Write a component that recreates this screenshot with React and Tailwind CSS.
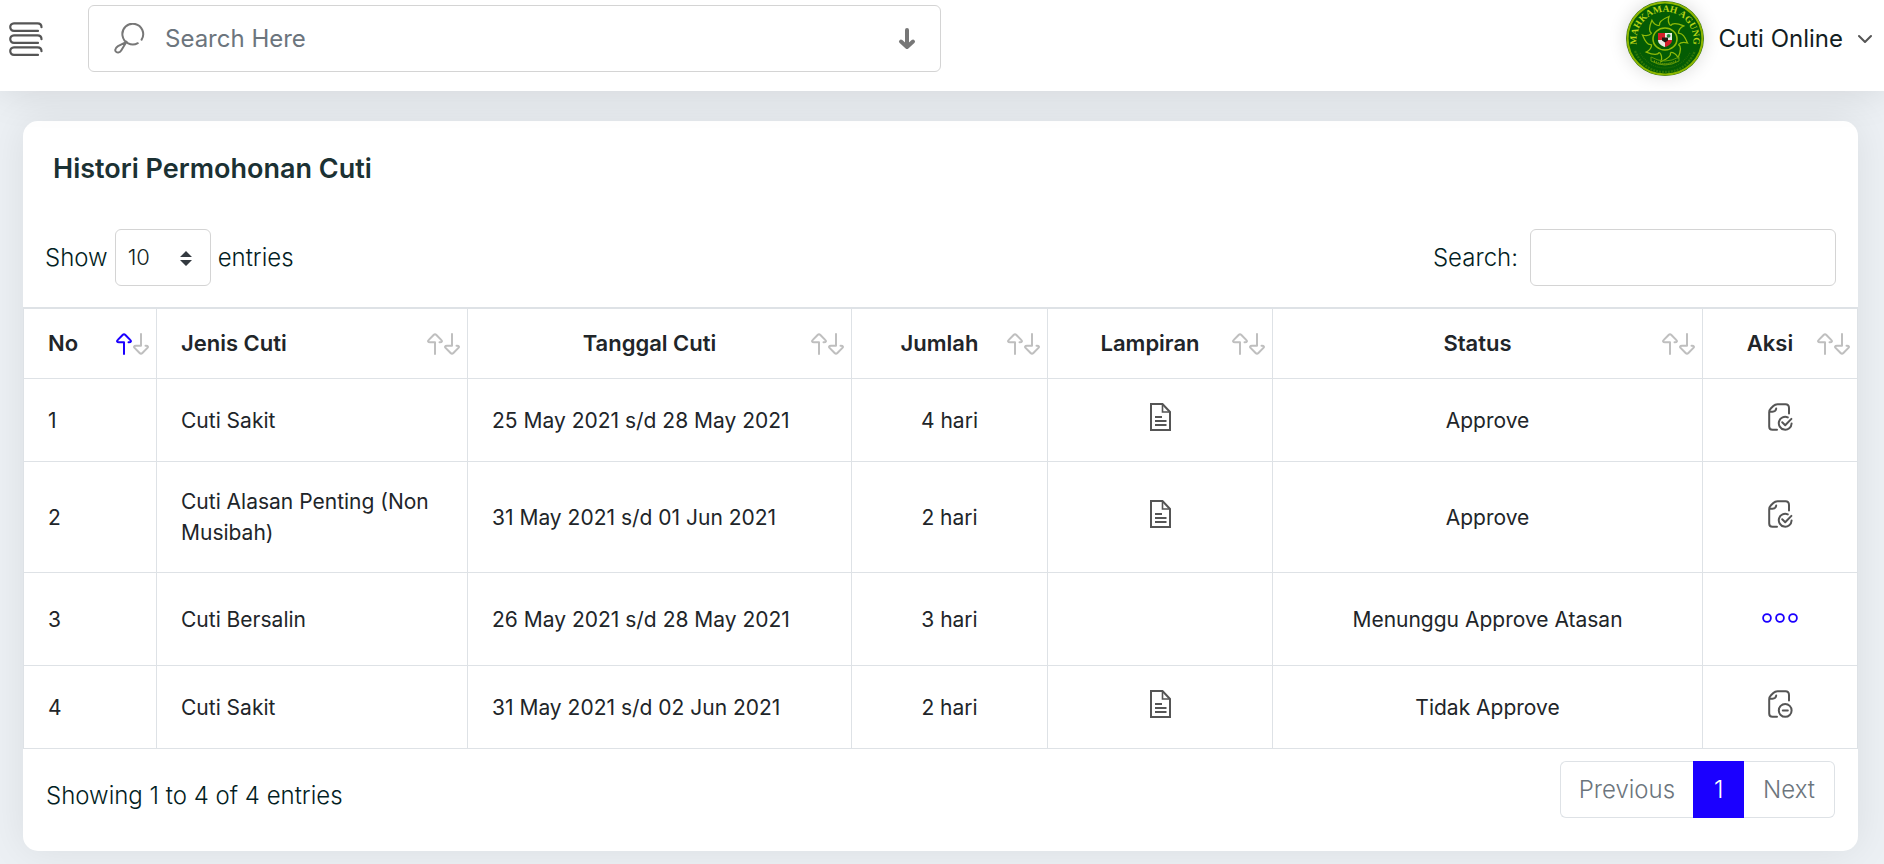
import { useState } from 'react';
import clsx from 'clsx';

const columns = [
  { key: 'no', label: 'No', width: 'w-[133px]', center: false },
  { key: 'jenis', label: 'Jenis Cuti', width: 'w-[311px]', center: false },
  { key: 'tanggal', label: 'Tanggal Cuti', width: 'w-[384px]', center: true },
  { key: 'jumlah', label: 'Jumlah', width: 'w-[196px]', center: true },
  { key: 'lampiran', label: 'Lampiran', width: 'w-[225px]', center: true },
  { key: 'status', label: 'Status', width: 'w-[430px]', center: true },
  { key: 'aksi', label: 'Aksi', width: 'w-[155px]', center: true },
];

const rows = [
  { no: 1, jenis: 'Cuti Sakit', tanggal: '25 May 2021 s/d 28 May 2021', jumlah: '4 hari', lampiran: true, status: 'Approve', aksi: 'check' },
  { no: 2, jenis: 'Cuti Alasan Penting (Non Musibah)', tanggal: '31 May 2021 s/d 01 Jun 2021', jumlah: '2 hari', lampiran: true, status: 'Approve', aksi: 'check' },
  { no: 3, jenis: 'Cuti Bersalin', tanggal: '26 May 2021 s/d 28 May 2021', jumlah: '3 hari', lampiran: false, status: 'Menunggu Approve Atasan', aksi: 'more' },
  { no: 4, jenis: 'Cuti Sakit', tanggal: '31 May 2021 s/d 02 Jun 2021', jumlah: '2 hari', lampiran: true, status: 'Tidak Approve', aksi: 'minus' },
];

const stroke = {
  fill: 'none',
  stroke: 'currentColor',
  strokeLinecap: 'round',
  strokeLinejoin: 'round',
};

function MenuIcon() {
  return (
    <svg width="34" height="34" viewBox="0 0 34 34" strokeWidth="2.2" {...stroke}>
      {[0, 12, 24].map((y) => (
        <path key={y} transform={`translate(0 ${y})`} d="M32.5 5.2C32.5 2.8 31 1.3 28.5 1.3H5C0 1.3 0 8.9 5 8.9H29" />
      ))}
    </svg>
  );
}

function SearchIcon() {
  return (
    <svg width="31" height="31" viewBox="0 0 31 31" strokeWidth="2" {...stroke}>
      <path d="M27.6 16.6A10.4 10.4 0 1 0 23.8 20.2" />
      <path d="M12.5 18.8L4 23.2C1.6 24.8.7 26.5 1.6 28.2C2.8 30.1 5.6 30 7.2 27.4L12.5 18.8" />
    </svg>
  );
}

function SortArrow({ active, down }) {
  return (
    <svg
      width="16"
      height="22"
      viewBox="0 0 16 22"
      strokeWidth="2"
      className={active ? 'text-[#1b00ff]' : 'text-[#bfbfbf]'}
      {...stroke}
    >
      <path
        transform={down ? 'matrix(1 0 0 -1 0 22)' : undefined}
        d="M8 21V9.3H3C1 9.3.5 8 1.8 6.9L6.6 2C7.6 1 8.4 1 9.4 2L14.2 6.9C15.5 8 15 9.3 13 9.3H12.5"
      />
    </svg>
  );
}

function FileIcon() {
  return (
    <svg width="21" height="28" viewBox="0 0 21 28" fill="none" stroke="currentColor" strokeWidth="2">
      <path d="M1 1H12.5L20 9V27H1Z" />
      <path d="M12.5 1V9H20" strokeWidth="1.6" />
      <path d="M5 14H12M5 18H16.5M5 22H16.5" />
    </svg>
  );
}

function FileStatusIcon({ type }) {
  return (
    <svg width="25" height="28" viewBox="0 0 25 28" strokeWidth="2" {...stroke}>
      <path d="M21 10.5V5C21 2.5 19.8 1.2 17.5 1.2H9.5C7.5 1.2 6.5 1.8 5.3 3L3 5.3C1.6 6.7 1.2 7.6 1.2 9.3V23.5C1.2 25.8 2.3 26.8 4.5 26.8H9" />
      <path d="M2 8.7H4.5C6.8 8.7 8 7.7 8.2 5.5" />
      {type === 'check' ? (
        <>
          <path d="M19.8 14.4A6.4 6.4 0 1 0 23.6 20.5" />
          <path d="M14.2 19.3L17.2 22.2L23.4 15.9" />
        </>
      ) : (
        <>
          <circle cx="17.2" cy="20.4" r="6.4" />
          <path d="M14.8 20.4H19.8" />
        </>
      )}
    </svg>
  );
}

function MoreIcon() {
  return (
    <svg width="36" height="10" viewBox="0 0 36 10" fill="none" stroke="currentColor" strokeWidth="1.8">
      <circle cx="5" cy="5" r="3.9" />
      <circle cx="18" cy="5" r="3.9" />
      <circle cx="31" cy="5" r="3.9" />
    </svg>
  );
}

function Emblem() {
  return (
    <svg width="78" height="75" viewBox="0 0 78 75" preserveAspectRatio="none">
      <defs>
        <path id="emblem-arc" d="M13.2 51A28.4 28.4 0 1 1 64.8 51" />
      </defs>
      <ellipse cx="39" cy="37.5" rx="39" ry="37.5" fill="#2f6b1c" />
      <ellipse cx="39" cy="37.5" rx="37.4" ry="36" fill="#045c04" stroke="#8db600" strokeWidth="2" />
      <text fill="#b9d416" fontFamily="'Liberation Serif', serif" fontWeight="bold" fontSize="9.5">
        <textPath href="#emblem-arc" startOffset="50%" textAnchor="middle">
          MAHKAMAH AGUNG
        </textPath>
      </text>
      <g fill="none" stroke="#8fbb08" strokeWidth="1.3">
        {[0, 45, 90, 135, 180, 225, 270, 315].map((angle) => (
          <path
            key={angle}
            transform={`translate(39 38) rotate(${angle})`}
            d="M-5.5 -13.5C-6.5 -17 -3.5 -19.5 4 -22.5C2.6 -18.5 3 -16 5.6 -13.4"
          />
        ))}
        <ellipse cx="39" cy="38" rx="12" ry="11" strokeWidth="1.6" />
      </g>
      {/* perisai */}
      <path d="M32 32H39V39H32Z" fill="#d3202a" />
      <path d="M39 32H46V39H39Z" fill="#e9ece4" />
      <path d="M32 39H39V46C34.5 44.5 32 42 32 39Z" fill="#e9ece4" />
      <path d="M46 39H39V46C43.5 44.5 46 42 46 39Z" fill="#d3202a" />
      <circle cx="42.6" cy="34.8" r="1.9" fill="#1d8a3a" />
      <path d="M36 36.5H42V39.5L39 41.5L36 39.5Z" fill="#1f1a10" />
      <g fill="none" stroke="#5f9a08">
        <path d="M25 56Q39 64 53 56V60Q39 68 25 60Z" strokeWidth="1" />
        <path d="M28 60Q39 65.5 50 60" stroke="#86a80a" strokeWidth="1.4" strokeDasharray="1 1" />
        <path d="M9 50C17 68 29 71 39 71S61 68 69 50" stroke="#2b7406" strokeWidth="2.4" strokeDasharray="2 1" />
        <path d="M14 52C21 63 30 67 39 67S57 63 64 52" stroke="#236b06" strokeWidth="1.4" strokeDasharray="1 1" />
      </g>
    </svg>
  );
}

function Header() {
  return (
    <header className="relative z-10 flex h-[91px] items-center bg-white pb-[14px] pl-[9px] pr-3 shadow-[0_0_42px_rgba(0,0,0,0.12)]">
      <button type="button" aria-label="Menu" className="shrink-0 text-[#555]">
        <MenuIcon />
      </button>
      <form
        className="ml-[45px] flex h-[67px] w-[853px] items-center rounded-md border border-[#d4d4d4] pl-[25px] pr-6 text-[#777]"
        onSubmit={(e) => e.preventDefault()}
      >
        <SearchIcon />
        <input
          type="text"
          aria-label="Search Here"
          placeholder="Search Here"
          className="ml-5 min-w-0 flex-1 bg-transparent text-2xl text-[#131e22] outline-none placeholder:text-[#6c757d]"
        />
        <button type="button" aria-label="Filter" className="text-[#777]">
          <svg width="18" height="22" viewBox="0 0 18 22" strokeWidth="4" {...stroke}>
            <path d="M9 2V18M3 13.5L9 19L15 13.5" />
          </svg>
        </button>
      </form>
      <button type="button" className="ml-auto flex items-center text-2xl text-[#131e22]">
        <span className="rounded-full shadow-[0_0_18px_rgba(0,0,0,0.15)]">
          <Emblem />
        </span>
        <span className="ml-[15px]">Cuti Online</span>
        <svg width="14" height="10" viewBox="0 0 14 10" strokeWidth="2" className="ml-[15px] text-[#555]" {...stroke}>
          <path d="M1 2L7 8L13 2" />
        </svg>
      </button>
    </header>
  );
}

function Aksi({ type }) {
  if (type === 'more') {
    return (
      <button type="button" aria-label="Menunggu" className="mx-auto flex h-11 items-center pb-[2px] text-[#1b00ff]">
        <MoreIcon />
      </button>
    );
  }
  return (
    <button type="button" aria-label="Detail" className="mx-auto block pb-[6px] text-[#555]">
      <FileStatusIcon type={type} />
    </button>
  );
}

export default function App() {
  const [sortBy, setSortBy] = useState('no');
  const [asc, setAsc] = useState(true);
  const [keyword, setKeyword] = useState('');

  const handleSort = (key) => {
    setAsc(key === sortBy ? !asc : true);
    setSortBy(key);
  };

  const visible = rows
    .filter((row) => `${row.jenis} ${row.tanggal} ${row.status}`.toLowerCase().includes(keyword.toLowerCase()))
    .sort((a, b) => {
      const order = a[sortBy] > b[sortBy] ? 1 : a[sortBy] < b[sortBy] ? -1 : 0;
      return asc ? order : -order;
    });

  return (
    <div className="min-h-screen bg-[#ecf0f4] font-['Inter',sans-serif] text-[#031e23]">
      <Header />

      <main className="pb-[13px] pl-[23px] pr-[26px] pt-[30px]">
        <section className="rounded-[15px] bg-white pb-[33px] pt-[30px] shadow-[0_0_42px_rgba(0,0,0,0.08)]">
          <h1 className="px-[30px] text-[27px] font-semibold leading-9 text-[#1b3133]">Histori Permohonan Cuti</h1>

          <div className="mt-[42px] flex items-center justify-between px-[22px] text-2xl font-light">
            <label className="flex items-center gap-[7px]">
              Show
              <span className="relative">
                <select className="h-[57px] w-24 appearance-none rounded-md border border-[#d4d4d4] bg-white pl-3 text-[22px] text-[#131e22]">
                  <option>10</option>
                  <option>25</option>
                  <option>50</option>
                </select>
                <svg
                  width="12"
                  height="15"
                  viewBox="0 0 12 15"
                  fill="#343a40"
                  className="pointer-events-none absolute right-[19px] top-[22px]"
                >
                  <path d="M6 0L12 6H0ZM6 15L0 9H12Z" />
                </svg>
              </span>
              entries
            </label>
            <label className="flex items-center gap-3">
              Search:
              <input
                type="search"
                value={keyword}
                onChange={(e) => setKeyword(e.target.value)}
                className="h-[57px] w-[306px] rounded-md border border-[#d4d4d4] px-4 text-[22px] outline-none"
              />
            </label>
          </div>

          <table className="mt-[21px] w-full table-fixed border-collapse border border-t-2 border-[#dee2e6] text-[21px] leading-[31px] text-[#212529]">
            <thead>
              <tr>
                {columns.map((col) => (
                  <th key={col.key} className={clsx('border border-[#dee2e6] p-0 font-semibold', col.width)}>
                    <button
                      type="button"
                      onClick={() => handleSort(col.key)}
                      className="flex h-[69px] w-full items-center gap-1 pl-6 pr-[7px] text-[22px]"
                    >
                      <span className={clsx('flex-1', col.center ? 'text-center' : 'text-left')}>{col.label}</span>
                      <span className="flex gap-px">
                        <SortArrow active={sortBy === col.key && asc} />
                        <SortArrow down active={sortBy === col.key && !asc} />
                      </span>
                    </button>
                  </th>
                ))}
              </tr>
            </thead>
            <tbody>
              {visible.map((row) => (
                <tr key={row.no}>
                  <td className="border border-[#dee2e6] px-6 py-6">{row.no}</td>
                  <td className="border border-[#dee2e6] px-6 py-6">{row.jenis}</td>
                  <td className="border border-[#dee2e6] px-6 py-6">{row.tanggal}</td>
                  <td className="border border-[#dee2e6] px-6 py-6 text-center">{row.jumlah}</td>
                  <td className="border border-[#dee2e6] px-6 py-6">
                    {row.lampiran && (
                      <button type="button" aria-label="Lampiran" className="mx-auto block pb-[6px] text-[#555]">
                        <FileIcon />
                      </button>
                    )}
                  </td>
                  <td className="border border-[#dee2e6] px-6 py-6 text-center">{row.status}</td>
                  <td className="border border-[#dee2e6] px-6 py-6">
                    <Aksi type={row.aksi} />
                  </td>
                </tr>
              ))}
            </tbody>
          </table>

          <div className="mt-3 flex items-center justify-between px-[23px] text-2xl">
            <p className="pt-3 font-light">Showing 1 to {visible.length} of 4 entries</p>
            <nav className="flex h-[57px] font-light text-[#6c757d]">
              <button type="button" className="rounded-l-md border border-r-0 border-[#dee2e6] px-[18px]">
                Previous
              </button>
              <button type="button" className="w-[51px] bg-[#1b00ff] text-white">
                1
              </button>
              <button type="button" className="rounded-r-md border border-l-0 border-[#dee2e6] px-[19px]">
                Next
              </button>
            </nav>
          </div>
        </section>
      </main>
    </div>
  );
}
